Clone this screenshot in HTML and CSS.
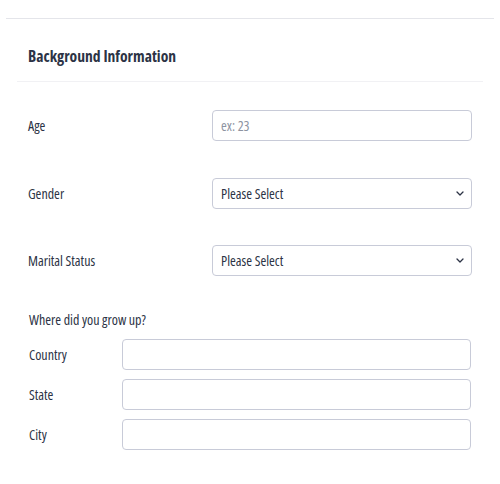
FILE: index.html
```html
<!DOCTYPE html>
<html>
<head>
<meta charset="utf-8">
<link rel="stylesheet" href="styles.css">
</head>
<body>
<div class="card">
  <div class="header">Background Information</div>
  <div class="rows">
    <div class="row first">
      <label class="label">Age</label>
      <input class="field" type="text" placeholder="ex: 23">
    </div>
    <div class="row">
      <label class="label">Gender</label>
      <div class="select-wrap">
        <select class="field select"><option>Please Select</option></select>
        <svg class="chev" width="8" height="5" viewBox="0 0 8 5"><path d="M1 1 L4 4 L7 1" fill="none" stroke="#2c3345" stroke-width="1.3" stroke-linecap="round" stroke-linejoin="round"/></svg>
      </div>
    </div>
    <div class="row second">
      <label class="label">Marital Status</label>
      <div class="select-wrap">
        <select class="field select"><option>Please Select</option></select>
        <svg class="chev" width="8" height="5" viewBox="0 0 8 5"><path d="M1 1 L4 4 L7 1" fill="none" stroke="#2c3345" stroke-width="1.3" stroke-linecap="round" stroke-linejoin="round"/></svg>
      </div>
    </div>
  </div>
  <div class="sub">
    <div class="sub-title">Where did you grow up?</div>
    <div class="sub-row">
      <label class="sub-label">Country</label>
      <input class="field" type="text">
    </div>
    <div class="sub-row">
      <label class="sub-label">State</label>
      <input class="field" type="text">
    </div>
    <div class="sub-row">
      <label class="sub-label">City</label>
      <input class="field" type="text">
    </div>
  </div>
</div>
</body>
</html>
```
FILE: styles.css
```css
* { box-sizing: border-box; }
html, body { margin: 0; background: #ffffff; }
body {
  font-family: "Open Sans", sans-serif;
  font-stretch: 75%;
  font-size: 14px;
  color: #2c3345;
}
.card {
  margin: 18px 6px 0;
  border-top: 1px solid #e4e5ea;
}
.header {
  margin: 0 11px;
  padding: 26px 11px 14px;
  line-height: 22px;
  font-size: 15.6px;
  font-weight: 700;
  color: #2c3345;
  border-bottom: 1px solid #f1f1f4;
}
.rows {
  padding: 0 22px;
}
.row {
  display: flex;
  align-items: center;
  margin-top: 37px;
}
.row.first { margin-top: 28px; }
.row.second { margin-top: 36px; }
.label {
  width: 184px;
  flex: none;
  line-height: 20px;
}
.field {
  flex: 1;
  width: 100%;
  height: 31px;
  border: 1px solid #c8cbd8;
  border-radius: 4px;
  padding: 0 8px;
  font-family: inherit;
  font-stretch: 75%;
  font-size: 14px;
  color: #2c3345;
  background: #fff;
  outline: none;
}
.field::placeholder { color: #8d93a1; }
.select-wrap {
  flex: 1;
  position: relative;
  display: flex;
}
.select {
  -webkit-appearance: none;
  appearance: none;
}
.chev {
  position: absolute;
  right: 8px;
  top: 13px;
  pointer-events: none;
}
.sub {
  padding: 0 23px;
  margin-top: 34px;
}
.sub-title {
  line-height: 20px;
  margin-bottom: 9px;
}
.sub-row {
  display: flex;
  align-items: center;
  margin-bottom: 9px;
}
.sub-label {
  width: 93px;
  flex: none;
  line-height: 20px;
}
```
